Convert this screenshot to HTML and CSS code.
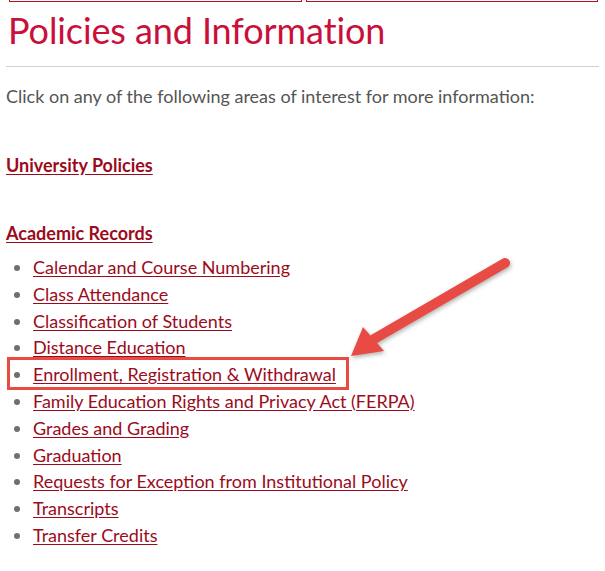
FILE: index.html
```html
<!DOCTYPE html>
<html>
<head>
<meta charset="utf-8">
<link rel="stylesheet" href="styles.css">
</head>
<body>
<div class="tabs">
  <div class="tab"></div>
  <div class="tab"></div>
</div>
<h1 class="title">Policies and Information</h1>
<hr class="rule">
<p class="intro">Click on any of the following areas of interest for more information:</p>
<p class="section first"><a href="#">University Policies</a></p>
<p class="section"><a href="#">Academic Records</a></p>
<ul class="links">
  <li><a href="#">Calendar and Course Numbering</a></li>
  <li><a href="#">Class Attendance</a></li>
  <li><a href="#">Classification of Students</a></li>
  <li><a href="#">Distance Education</a></li>
  <li><a href="#">Enrollment, Registration &amp; Withdrawal</a></li>
  <li><a href="#">Family Education Rights and Privacy Act (FERPA)</a></li>
  <li><a href="#">Grades and Grading</a></li>
  <li><a href="#">Graduation</a></li>
  <li><a href="#">Requests for Exception from Institutional Policy</a></li>
  <li><a href="#">Transcripts</a></li>
  <li><a href="#">Transfer Credits</a></li>
</ul>
<div class="highlight"></div>
<svg class="arrow" width="605" height="571" viewBox="0 0 605 571">
  <g class="arrow-shape">
    <line x1="505" y1="263" x2="374" y2="339" stroke="#e84a44" stroke-width="10" stroke-linecap="round"/>
    <polygon points="351,356 363,327 384,351" fill="#e84a44"/>
  </g>
</svg>
</body>
</html>
```
FILE: styles.css
```css
html, body {
  margin: 0;
  padding: 0;
  background: #ffffff;
}
body {
  position: relative;
  width: 605px;
  height: 571px;
  overflow: hidden;
  padding: 0 6px;
  box-sizing: border-box;
  font-family: Lato, "Open Sans", sans-serif;
  font-size: 18px;
  color: #555555;
}
.tabs {
  display: flex;
  gap: 4px;
  padding: 0 1px 0 3px;
}
.tab {
  flex: 1;
  height: 1px;
  border: 1px solid #b3121e;
  border-top: none;
}
.title {
  margin: 6px 0 0 2px;
  font-family: Lato, sans-serif;
  font-weight: 400;
  font-size: 36px;
  line-height: 44px;
  color: #c8103a;
  letter-spacing: -0.1px;
}
.rule {
  margin: 14px 0 0 0;
  border: none;
  border-top: 1px solid #cfcfcf;
  height: 0;
}
.intro {
  margin: 16px 0 0 0;
  line-height: 27px;
}
.section {
  margin: 41px 0 0 0;
  line-height: 27px;
  font-weight: 700;
}
.section.first {
  margin-top: 42px;
}
a {
  color: #9b0b1c;
  text-decoration: underline;
  text-underline-offset: 2px;
}
.links {
  margin: 7px 0 0 0;
  padding: 0 0 0 27px;
  list-style: disc;
}
.links li {
  line-height: 26.8px;
}
.links li::marker {
  color: #6f6f6f;
  font-size: 19px;
}
.highlight {
  position: absolute;
  left: 7px;
  top: 357px;
  width: 336px;
  height: 27px;
  border: 3px solid #e84a44;
}
.arrow {
  position: absolute;
  left: 0;
  top: 0;
  pointer-events: none;
}
.arrow-shape {
  filter: drop-shadow(1px 2px 2px rgba(0,0,0,0.3));
}
```
